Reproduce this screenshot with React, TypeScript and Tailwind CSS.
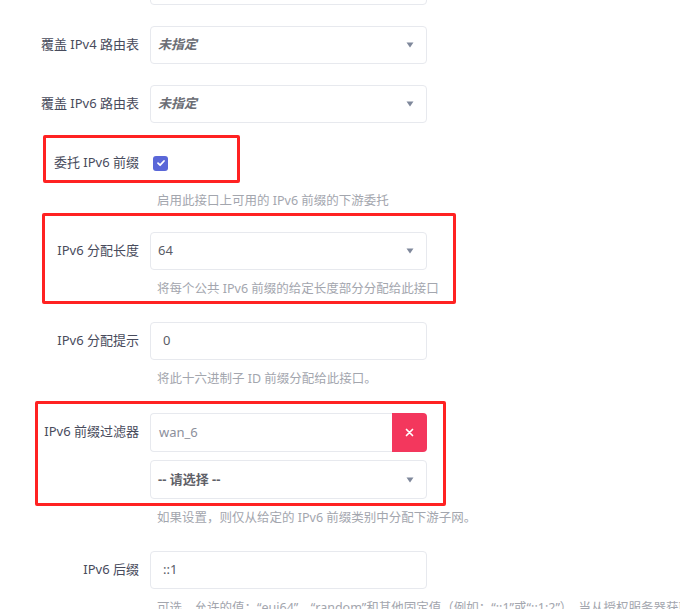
import React from "react";

const font = {
  fontFamily: '"Noto Sans", "Noto Sans CJK SC", sans-serif',
};

const Arrow = () => (
  <svg width="8" height="6" viewBox="0 0 8 6" className="shrink-0">
    <path d="M0.5 0.5 L7.5 0.5 L4 5.5 Z" fill="#7f889b" />
  </svg>
);

const Label = ({ children }: { children?: React.ReactNode }) => (
  <div className="w-[139px] shrink-0 h-[38px] flex items-center justify-end text-[13px] text-[#484b5c] whitespace-nowrap">
    {children}
  </div>
);

const Desc = ({ children }: { children: React.ReactNode }) => (
  <div className="mt-[10px] leading-[18px] text-[12.5px] text-[#a3a6ae] whitespace-nowrap pl-[7px]">
    {children}
  </div>
);

const Select = ({ value, italic, bold }: { value: string; italic?: boolean; bold?: boolean }) => (
  <div className="h-[38px] w-[277px] rounded-[4px] border border-[#e7e9ee] bg-white flex items-center justify-between pl-[7px] pr-[12px]">
    <span
      className={
        "text-[13px] " +
        (italic ? "italic font-bold text-[#6b6d74] " : "") +
        (bold ? "font-bold text-[#5f6168] " : "") +
        (!italic && !bold ? "text-[#5a5c66]" : "")
      }
    >
      {value}
    </span>
    <Arrow />
  </div>
);

const Input = ({ value }: { value: string }) => (
  <div className="h-[38px] w-[277px] rounded-[4px] border border-[#e7e9ee] bg-white flex items-center pl-[12px] text-[13px] text-[#5a5c66]">
    {value}
  </div>
);

const Mark = ({ className }: { className: string }) => (
  <span className={"pointer-events-none absolute border-[3px] border-[#ff2222] rounded-[2px] " + className} />
);

export default function App() {
  return (
    <div style={font} className="w-[680px] h-[609px] overflow-hidden bg-white">
      <div className="-mt-[33px] flex flex-col">
        {/* row scrolled above the top edge */}
        <div className="flex gap-[11px] mb-[21px]">
          <Label />
          <Input value="" />
        </div>

        <div className="flex gap-[11px] mb-[21px]">
          <Label>覆盖 IPv4 路由表</Label>
          <Select value="未指定" italic />
        </div>

        <div className="flex gap-[11px] mb-[21px]">
          <Label>覆盖 IPv6 路由表</Label>
          <Select value="未指定" italic />
        </div>

        {/* 委托 IPv6 前缀 */}
        <div className="relative flex mb-[22px]">
          <Mark className="left-[43px] w-[197px] -top-[9px] h-[48px]" />
          <div className="flex flex-col">
            <div className="flex gap-[14px]">
              <Label>委托 IPv6 前缀</Label>
              <div className="h-[38px] flex items-center">
                <span className="w-[15px] h-[15px] rounded-[3px] bg-[#5a67d8] flex items-center justify-center">
                  <svg width="10" height="10" viewBox="0 0 10 10">
                    <path d="M2 5.2 L4.1 7.2 L8 3" stroke="#fff" strokeWidth="1.8" fill="none" strokeLinecap="round" strokeLinejoin="round" />
                  </svg>
                </span>
              </div>
            </div>
            <div className="ml-[150px]">
              <Desc>启用此接口上可用的 IPv6 前缀的下游委托</Desc>
            </div>
          </div>
        </div>

        {/* IPv6 分配长度 */}
        <div className="relative flex gap-[11px] mb-[24px]">
          <Mark className="left-[42px] w-[414px] -top-[19px] -bottom-[6px]" />
          <Label>IPv6 分配长度</Label>
          <div className="flex flex-col">
            <Select value="64" />
            <Desc>将每个公共 IPv6 前缀的给定长度部分分配给此接口</Desc>
          </div>
        </div>

        {/* IPv6 分配提示 */}
        <div className="flex gap-[11px] mb-[25px]">
          <Label>IPv6 分配提示</Label>
          <div className="flex flex-col">
            <Input value="0" />
            <Desc>将此十六进制子 ID 前缀分配给此接口。</Desc>
          </div>
        </div>

        {/* IPv6 前缀过滤器 */}
        <div className="flex gap-[11px] mb-[24px]">
          <Label>IPv6 前缀过滤器</Label>
          <div className="flex flex-col">
            <div className="relative flex flex-col gap-[8px]">
              <Mark className="-left-[115px] w-[411px] -top-[12px] -bottom-[7px]" />
              <div className="flex w-[277px] h-[39px]">
                <div className="flex-1 rounded-l-[4px] border border-r-0 border-[#e7e9ee] flex items-center pl-[8px] text-[13px] text-[#8c909c]">
                  wan_6
                </div>
                <div className="w-[35px] rounded-r-[4px] bg-[#f3375d] flex items-center justify-center">
                  <svg width="9" height="9" viewBox="0 0 9 9">
                    <path d="M1.5 1.5 L7.5 7.5 M7.5 1.5 L1.5 7.5" stroke="#fff" strokeWidth="1.7" strokeLinecap="round" />
                  </svg>
                </div>
              </div>
              <div className="h-[39px] w-[277px] rounded-[4px] border border-[#e7e9ee] bg-white flex items-center justify-between pl-[7px] pr-[12px]">
                <span className="text-[13px] font-bold text-[#5f6168]">-- 请选择 --</span>
                <Arrow />
              </div>
            </div>
            <Desc>如果设置，则仅从给定的 IPv6 前缀类别中分配下游子网。</Desc>
          </div>
        </div>

        {/* IPv6 后缀 */}
        <div className="flex gap-[11px]">
          <Label>IPv6 后缀</Label>
          <div className="flex flex-col">
            <Input value="::1" />
            <Desc>可选，允许的值：“eui64”、“random”和其他固定值（例如：“::1”或“::1:2”）。当从授权服务器获取到 IPv6 前缀时，使用后缀组成 IPv6 地址。</Desc>
          </div>
        </div>
      </div>
    </div>
  );
}
